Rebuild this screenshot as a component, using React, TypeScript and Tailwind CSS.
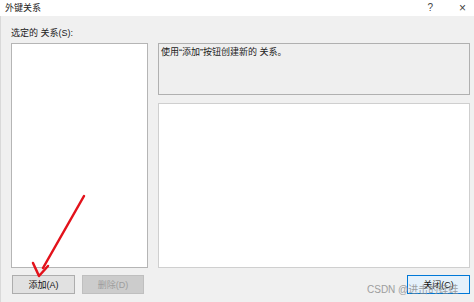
export default function App() {
  return (
    <div
      className="relative w-[474px] h-[302px] overflow-hidden bg-[#f0f0f0] text-[#000] text-[9px] leading-[12px]"
      style={{ fontFamily: '"Liberation Sans", "Noto Sans CJK SC", sans-serif' }}
    >
      {/* Title bar */}
      <div className="h-[16px] bg-white flex items-center pl-[5px] pr-[8px]">
        <span className="text-[9px] text-[#222]">外键关系</span>
        <span className="ml-auto text-[10px] text-[#444] mr-[26px]">?</span>
        <span className="text-[12px] text-[#444] leading-none">×</span>
      </div>

      {/* Body */}
      <div className="flex flex-col h-[286px] pl-[10px] pr-[4px] border-l border-[#d9d9d9]">
        <div className="mt-[11px] h-[12px] mb-[4px] text-[#1a1a1a]">选定的 关系(S):</div>

        <div className="flex gap-[10px] h-[225px]">
          <div className="w-[137px] bg-white border border-[#b5b5b5]" />
          <div className="flex-1 flex flex-col gap-[8px]">
            <div className="h-[52px] border border-[#b0b0b0] bg-[#efefef] px-[2px] pt-[2px] text-[#1a1a1a]">
              使用“添加”按钮创建新的 关系。
            </div>
            <div className="flex-1 bg-white border border-[#cfcfcf]" />
          </div>
        </div>

        <div className="flex items-center mt-[7px] h-[19px]">
          <button className="ml-[1px] w-[63px] h-[19px] bg-[#e1e1e1] border border-[#adadad] text-[9px] text-[#111]">
            添加(A)
          </button>
          <button className="ml-[7px] w-[62px] h-[19px] bg-[#cccccc] border border-[#bfbfbf] text-[9px] text-[#9d9d9d]">
            删除(D)
          </button>
          <button className="ml-auto w-[63px] h-[19px] bg-[#e5f1fb] border border-[#0078d7] text-[9px] text-[#111]">
            关闭(C)
          </button>
        </div>
      </div>

      {/* Watermark */}
      <div className="absolute left-[367px] top-[284px] text-[10px] text-[#8a8a8a] opacity-80 whitespace-nowrap">
        CSDN @进击的蛙蛙
      </div>

      {/* Red annotation arrow */}
      <svg className="absolute left-0 top-0 pointer-events-none" width="474" height="302">
        <line x1="84" y1="196" x2="43" y2="268" stroke="#e3121b" strokeWidth="2.5" strokeLinecap="round" />
        <polyline
          points="33,263 39,276 48,266"
          fill="none"
          stroke="#e3121b"
          strokeWidth="2.5"
          strokeLinecap="round"
          strokeLinejoin="round"
        />
      </svg>
    </div>
  );
}
